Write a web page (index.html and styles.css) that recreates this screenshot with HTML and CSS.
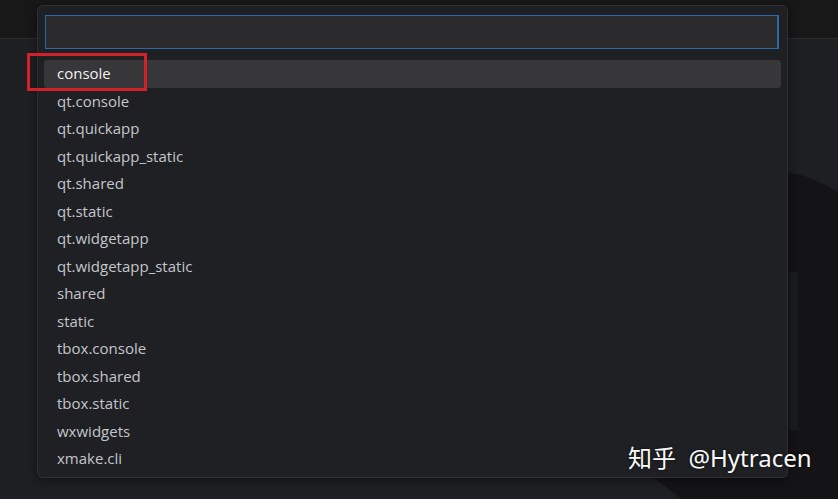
FILE: index.html
```html
<!DOCTYPE html>
<html lang="zh">
<head>
<meta charset="UTF-8" />
<title>xmake templates</title>
<link rel="stylesheet" href="styles.css">
</head>
<body>
  <div class="window">
    <div class="titlebar"></div>
    <div class="workspace">
      <svg class="backdrop" width="838" height="460" viewBox="0 39 838 460" aria-hidden="true">
        <path d="M788 172 Q812 176 838 192 L838 499 L682 499 L652 477 L788 477 Z" fill="#141417"/>
        <rect x="789" y="272" width="9" height="158" fill="#1a1b1e"/>
      </svg>
    </div>

    <div class="picker">
      <input class="picker-input" type="text" aria-label="template" />
      <ul class="picker-list">
        <li class="picker-item is-active">console</li>
        <li class="picker-item">qt.console</li>
        <li class="picker-item">qt.quickapp</li>
        <li class="picker-item">qt.quickapp_static</li>
        <li class="picker-item">qt.shared</li>
        <li class="picker-item">qt.static</li>
        <li class="picker-item">qt.widgetapp</li>
        <li class="picker-item">qt.widgetapp_static</li>
        <li class="picker-item">shared</li>
        <li class="picker-item">static</li>
        <li class="picker-item">tbox.console</li>
        <li class="picker-item">tbox.shared</li>
        <li class="picker-item">tbox.static</li>
        <li class="picker-item">wxwidgets</li>
        <li class="picker-item">xmake.cli</li>
      </ul>
    </div>

    <div class="highlight-box"></div>
    <div class="watermark">知乎&nbsp;&nbsp;@Hytracen</div>
  </div>
</body>
</html>
```

FILE: styles.css
```css
/* base */
*, *::before, *::after {
  box-sizing: border-box;
}
html, body {
  margin: 0;
  padding: 0;
  background: #1e1f22;
  font-family: 'Open Sans', 'Noto Sans', sans-serif;
  overflow: hidden;
}
.window {
  position: relative;
  width: 838px;
  height: 499px;
  display: flex;
  flex-direction: column;
}
.titlebar {
  height: 39px;
  background: #181818;
  border-bottom: 1px solid #2c2c2e;
  flex-shrink: 0;
}
.workspace {
  flex: 1;
  position: relative;
  background: #1e1f22;
}
.backdrop {
  position: absolute;
  left: 0;
  top: 0;
  display: block;
}
/* quick pick popup */
.picker {
  position: absolute;
  left: 37px;
  top: 5px;
  width: 751px;
  height: 473px;
  background: #1f2023;
  border: 1px solid #2f3033;
  border-radius: 6px;
  box-shadow: 0 2px 10px rgba(0, 0, 0, 0.45);
  padding: 9px 6px 0 6px;
  display: flex;
  flex-direction: column;
}
.picker-input {
  display: block;
  margin: 0 1px 0 1px;
  width: 734px;
  height: 34px;
  background: #2a2a2c;
  border: 1px solid #2c6aa5;
  border-right-width: 2px;
  outline: none;
  color: #ccc;
  font: inherit;
}
.picker-list {
  list-style: none;
  margin: 11px 0 0 0;
  padding: 0;
}
.picker-item {
  height: 27.5px;
  line-height: 27.5px;
  padding-left: 13px;
  font-size: 15px;
  color: #c4c6cb;
  border-radius: 3px;
}
.picker-item.is-active {
  background: #37373a;
  color: #f0f0f0;
}
/* annotation */
.highlight-box {
  position: absolute;
  left: 27px;
  top: 53px;
  width: 120px;
  height: 38px;
  border: 3px solid #d2212a;
}
.watermark {
  position: absolute;
  left: 628px;
  top: 440px;
  font-family: 'Noto Sans', 'Noto Sans CJK SC', sans-serif;
  font-size: 24px;
  line-height: 36px;
  color: #fafafa;
  text-shadow: 0 0 3px rgba(0, 0, 0, 0.6);
}
```
